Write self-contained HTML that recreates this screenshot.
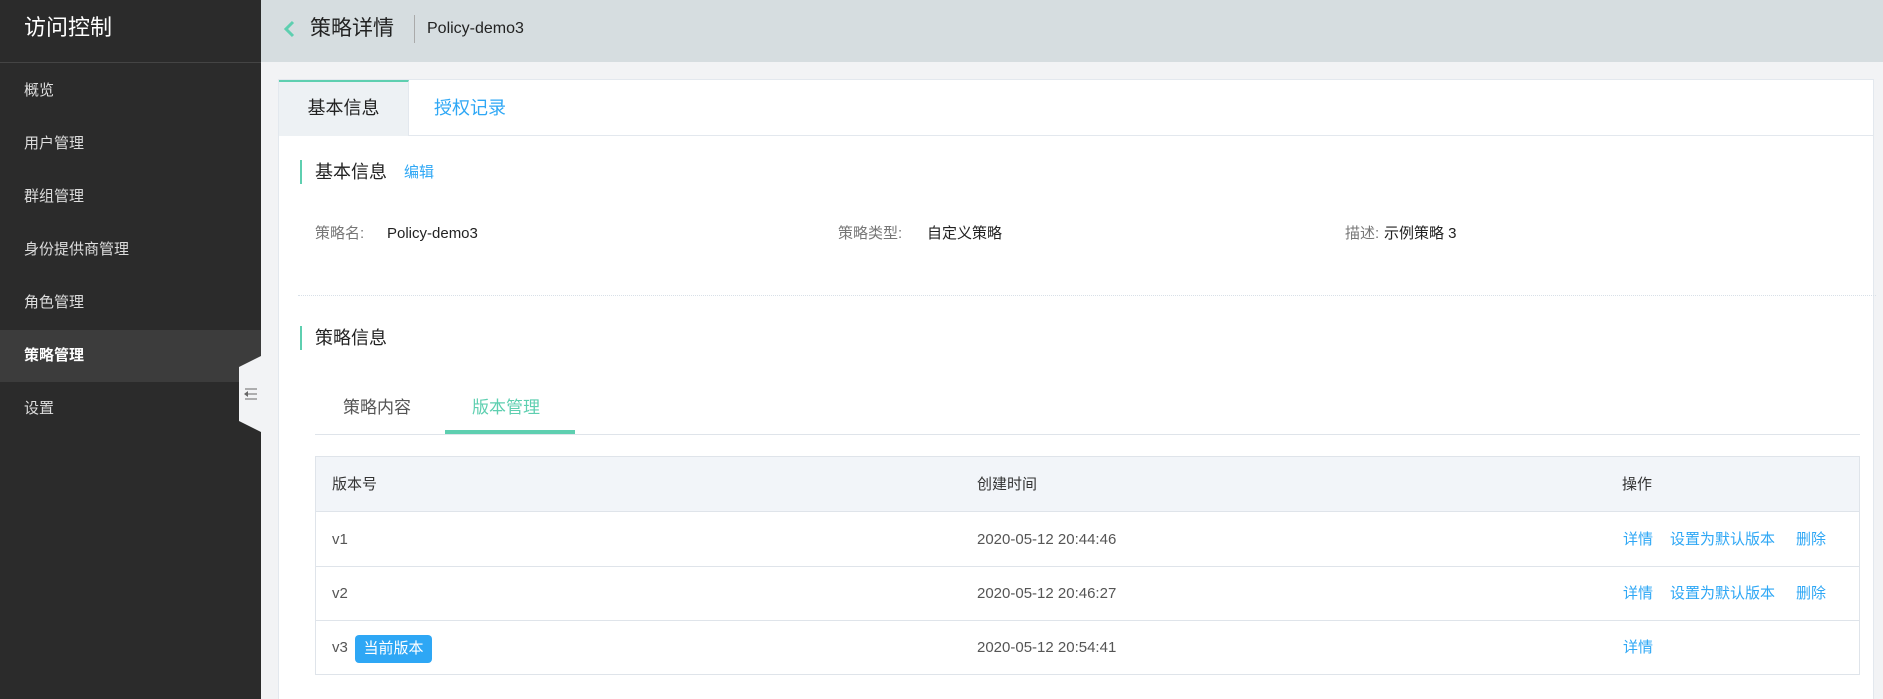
<!DOCTYPE html>
<html style="overflow:hidden;height:699px"><head><meta charset="utf-8"><style>
*{margin:0;padding:0;box-sizing:border-box}
body{width:1883px;height:699px;overflow:hidden;background:#f2f3f5;font-family:"Liberation Sans","Noto Sans CJK SC",sans-serif;position:relative;color:#333;line-height:20px}
.abs{position:absolute;white-space:nowrap}
#side{position:absolute;left:0;top:0;width:261px;height:699px;background:#2b2b2b}
#side .t{left:24px;top:14px;font-size:22px;line-height:28px;color:#fff}
#side .line{position:absolute;left:0;top:62px;width:261px;height:1px;background:#444}
.mi{position:absolute;left:0;width:261px;height:52px;line-height:52px;padding-left:24px;font-size:15px;color:#ddd}
#hdr{position:absolute;left:261px;top:0;width:1622px;height:62px;background:#d6dde0}
#panel{position:absolute;left:278px;top:79px;width:1596px;height:620px;background:#fff;border:1px solid #e3e8ee;border-bottom:none}
.lnk{color:#2ea7f5}
.lab{color:#777}
.cell{position:absolute;font-size:15px;line-height:20px;color:#555;white-space:nowrap}
.hl{position:absolute;left:315px;width:1545px;height:1px;background:#dfe4ea}
</style></head><body>
<div id="side">
 <div class="abs t">访问控制</div>
 <div class="line"></div>
 <div class="mi" style="top:65px">概览</div>
 <div class="mi" style="top:118px">用户管理</div>
 <div class="mi" style="top:171px">群组管理</div>
 <div class="mi" style="top:224px">身份提供商管理</div>
 <div class="mi" style="top:277px">角色管理</div>
 <div class="mi" style="top:330px;background:#3c3c3c;color:#fff;font-weight:bold">策略管理</div>
 <div class="mi" style="top:383px">设置</div>
</div>
<svg class="abs" style="left:239px;top:355px" width="22" height="78"><polygon points="0,12 22,1 22,77 0,66" fill="#f2f3f5"/><g stroke="#888" stroke-width="1.3"><line x1="6" y1="34" x2="18" y2="34"/><line x1="9" y1="39" x2="18" y2="39"/><line x1="6" y1="44" x2="18" y2="44"/></g><polygon points="5,39 9,36 9,42" fill="#666"/></svg>
<div id="hdr">
 <svg class="abs" style="left:21px;top:19px" width="14" height="20"><polyline points="11,3 4,10 11,17" fill="none" stroke="#5ecfb0" stroke-width="3"/></svg>
 <div class="abs" style="left:49px;top:15px;font-size:21px;line-height:28px;color:#222">策略详情</div>
 <div class="abs" style="left:153px;top:15px;width:1px;height:28px;background:#aaa"></div>
 <div class="abs" style="left:166px;top:18px;font-size:16px;line-height:22px;color:#222">Policy-demo3</div>
</div>
<div id="panel"></div>
<div class="abs" style="left:278px;top:79px;width:1596px;height:57px;border-bottom:1px solid #e3e8ee"></div>
<div class="abs" style="left:279px;top:80px;width:130px;height:56px;background:#edf1f4;border-top:2px solid #5ecfb0;border-right:1px solid #e3e8ee;text-align:center;line-height:52px;font-size:18px;color:#222">基本信息</div>
<div class="abs lnk" style="left:434px;top:80px;line-height:56px;font-size:18px">授权记录</div>
<div class="abs" style="left:300px;top:160px;width:2px;height:24px;background:#5ecfb0"></div>
<div class="abs" style="left:315px;top:160px;font-size:18px;line-height:24px;color:#222">基本信息</div>
<div class="abs lnk" style="left:404px;top:163px;font-size:15px">编辑</div>
<div class="cell" style="top:224px;left:315px"><span class="lab">策略名:</span></div>
<div class="cell" style="top:224px;left:387px;color:#222">Policy-demo3</div>
<div class="cell" style="top:224px;left:838px"><span class="lab">策略类型:</span></div>
<div class="cell" style="top:224px;left:927px;color:#222">自定义策略</div>
<div class="cell" style="top:224px;left:1345px"><span class="lab">描述:</span></div>
<div class="cell" style="top:224px;left:1384px;color:#222">示例策略 3</div>
<div class="abs" style="left:298px;top:295px;width:1578px;height:1px;border-top:1px dotted #d8e0e8"></div>
<div class="abs" style="left:300px;top:326px;width:2px;height:24px;background:#5ecfb0"></div>
<div class="abs" style="left:315px;top:326px;font-size:18px;line-height:24px;color:#222">策略信息</div>
<div class="abs" style="left:343px;top:397px;font-size:17px;line-height:22px;color:#555">策略内容</div>
<div class="abs" style="left:472px;top:397px;font-size:17px;line-height:22px;color:#5ecfb0">版本管理</div>
<div class="hl" style="top:434px"></div>
<div class="abs" style="left:445px;top:430px;width:130px;height:4px;background:#5ecfb0"></div>
<div class="abs" style="left:315px;top:456px;width:1545px;height:219px;border:1px solid #dfe4ea"></div>
<div class="abs" style="left:316px;top:457px;width:1543px;height:54px;background:#f2f5f9"></div>
<div class="hl" style="top:511px"></div>
<div class="hl" style="top:566px"></div>
<div class="hl" style="top:620px"></div>
<div class="cell" style="left:332px;top:475px;color:#333">版本号</div>
<div class="cell" style="left:977px;top:475px;color:#333">创建时间</div>
<div class="cell" style="left:1622px;top:475px;color:#333">操作</div>
<div class="cell" style="left:332px;top:530px">v1</div>
<div class="cell" style="left:977px;top:530px">2020-05-12 20:44:46</div>
<div class="cell" style="left:1623px;top:530px;color:#2ea7f5">详情</div>
<div class="cell" style="left:1670px;top:530px;color:#2ea7f5">设置为默认版本</div>
<div class="cell" style="left:1796px;top:530px;color:#2ea7f5">删除</div>
<div class="cell" style="left:332px;top:584px">v2</div>
<div class="cell" style="left:977px;top:584px">2020-05-12 20:46:27</div>
<div class="cell" style="left:1623px;top:584px;color:#2ea7f5">详情</div>
<div class="cell" style="left:1670px;top:584px;color:#2ea7f5">设置为默认版本</div>
<div class="cell" style="left:1796px;top:584px;color:#2ea7f5">删除</div>
<div class="cell" style="left:332px;top:638px">v3</div>
<div class="abs" style="left:355px;top:635px;width:77px;height:28px;background:#2ea7f5;border-radius:4px;color:#fff;font-size:15px;text-align:center;line-height:28px">当前版本</div>
<div class="cell" style="left:977px;top:638px">2020-05-12 20:54:41</div>
<div class="cell" style="left:1623px;top:638px;color:#2ea7f5">详情</div>
</body></html>
